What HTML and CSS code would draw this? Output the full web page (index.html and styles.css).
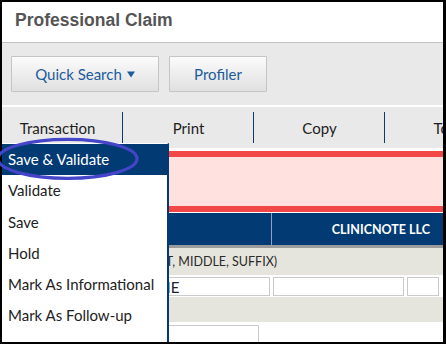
FILE: index.html
```html
<!DOCTYPE html>
<html lang="en">
<head>
<meta charset="utf-8">
<title>Professional Claim</title>
<link rel="stylesheet" href="styles.css">
</head>
<body>
<div class="frame">
  <header class="title-bar"><h1>Professional Claim</h1></header>
  <div class="toolbar">
    <button class="btn btn-search">Quick Search<svg class="caret" width="8" height="7" viewBox="0 0 8 7"><polygon points="0,0.5 8,0.5 4,6.5" fill="#1d5b9b"/></svg></button>
    <button class="btn btn-profiler">Profiler</button>
  </div>
  <nav class="tabs">
    <div class="tab">Transaction</div>
    <div class="tab">Print</div>
    <div class="tab">Copy</div>
    <div class="tab">Tools</div>
  </nav>
  <div class="alert"></div>
  <div class="section-head">
    <div class="cell-left"></div>
    <div class="cell-right">CLINICNOTE LLC</div>
  </div>
  <div class="label-row">NAME (LAST, FIRST, MIDDLE, SUFFIX)</div>
  <div class="input-row">
    <input class="field f-last" type="text" value="DOE">
    <input class="field f-first" type="text" value="JANE">
    <input class="field f-middle" type="text" value="">
    <input class="field f-suffix" type="text" value="">
  </div>
  <div class="label-row blank"></div>
  <div class="input-row tall">
    <input class="field f-wide" type="text" value="">
  </div>
  <ul class="menu">
    <li class="active">Save &amp; Validate</li>
    <li>Validate</li>
    <li>Save</li>
    <li>Hold</li>
    <li>Mark As Informational</li>
    <li>Mark As Follow-up</li>
  </ul>
</div>
<svg class="annotation" width="446" height="344" viewBox="0 0 446 344">
  <ellipse cx="67.5" cy="158.8" rx="69.5" ry="19.5" fill="none" stroke="#4545c9" stroke-width="3.2"/>
</svg>
</body>
</html>
```

FILE: styles.css
```css
* { box-sizing: border-box; }
html, body { margin: 0; padding: 0; }
body {
  position: relative;
  width: 446px;
  height: 344px;
  overflow: hidden;
  background: #fff;
  font-family: Lato, "Open Sans", sans-serif;
}
.frame {
  position: relative;
  width: 446px;
  height: 344px;
  border: 2px solid #000;
  border-right-width: 3px;
  overflow: hidden;
  background: #fff;
}
.title-bar {
  height: 41px;
  border-bottom: 1px solid #c3c3c3;
  padding: 0 0 3px 13px;
  display: flex;
  align-items: center;
}
.title-bar h1 {
  margin: 0;
  font: bold 17.5px/1 "Liberation Sans", Arial, sans-serif;
  color: #555;
}
.toolbar {
  height: 62px;
  background: #e9e9e9;
  display: flex;
  align-items: flex-start;
  gap: 10px;
  padding: 13px 0 0 9px;
  margin-bottom: 2px;
}
.btn {
  height: 36px;
  padding: 0;
  border: 1px solid #c5c5c5;
  border-radius: 1px;
  background: linear-gradient(#fbfbfb, #e0e0e0);
  color: #1d5b9b;
  font: 15px Lato, sans-serif;
  display: flex;
  align-items: center;
  justify-content: center;
}
.btn-search { width: 148px; }
.btn-profiler { width: 98px; }
.caret { margin-left: 5px; }
.tabs {
  height: 41px;
  background: #e9e9e9;
  display: flex;
  margin-left: -10px;
}
.tab {
  flex: none;
  width: 131px;
  position: relative;
  display: flex;
  align-items: center;
  justify-content: center;
  font-size: 15px;
  color: #1e1e1e;
}
.tab::after {
  content: "";
  position: absolute;
  right: 0;
  top: 5px;
  bottom: 5px;
  width: 1px;
  background: #0b3a6e;
}
.alert {
  margin-top: 3px;
  margin-bottom: 1px;
  height: 61px;
  background: #ffe2df;
  border-top: 6px solid #f24747;
  border-bottom: 6px solid #f24747;
}
.section-head {
  height: 35px;
  background: #023b74;
  border-bottom: 3px solid #9b9b9b;
  display: flex;
}
.cell-left {
  width: 270px;
  border-right: 1px solid #8fa3bf;
}
.cell-right {
  flex: 1;
  display: flex;
  align-items: center;
  justify-content: flex-end;
  padding-right: 13px;
  color: #fff;
  font-size: 12.5px;
  font-weight: bold;
}
.label-row {
  height: 27px;
  background: #e6e5dd;
  display: flex;
  align-items: center;
  padding-left: 61px;
  font-size: 12.5px;
  color: #2a2a2a;
}
.label-row.blank { height: 25px; }
.input-row {
  height: 22px;
  display: flex;
  gap: 3px;
  padding: 2px 0 0 4px;
}
.input-row.tall { height: 24px; padding-top: 3px; }
.field {
  height: 19px;
  border: 1px solid #cacaca;
  padding: 0 4px;
  margin: 0;
  font: 15px Lato, sans-serif;
  color: #222;
  background: #fff;
}
.f-last { width: 129px; }
.f-first { width: 132px; }
.f-middle { width: 131px; }
.f-suffix { width: 32px; }
.f-wide { width: 253px; height: 30px; }
.menu {
  position: absolute;
  left: 0;
  top: 141px;
  bottom: 0;
  width: 167px;
  margin: 0;
  padding: 0;
  list-style: none;
  background: #fff;
  border-top: 1px solid #fff;
  border-right: 2px solid #023b74;
}
.menu li {
  height: 31.3px;
  line-height: 31.3px;
  padding-left: 6px;
  font-size: 15px;
  color: #222;
  white-space: nowrap;
}
.menu li.active {
  background: #023b74;
  color: #fff;
}
.annotation {
  position: absolute;
  left: 0;
  top: 0;
  pointer-events: none;
}
```
